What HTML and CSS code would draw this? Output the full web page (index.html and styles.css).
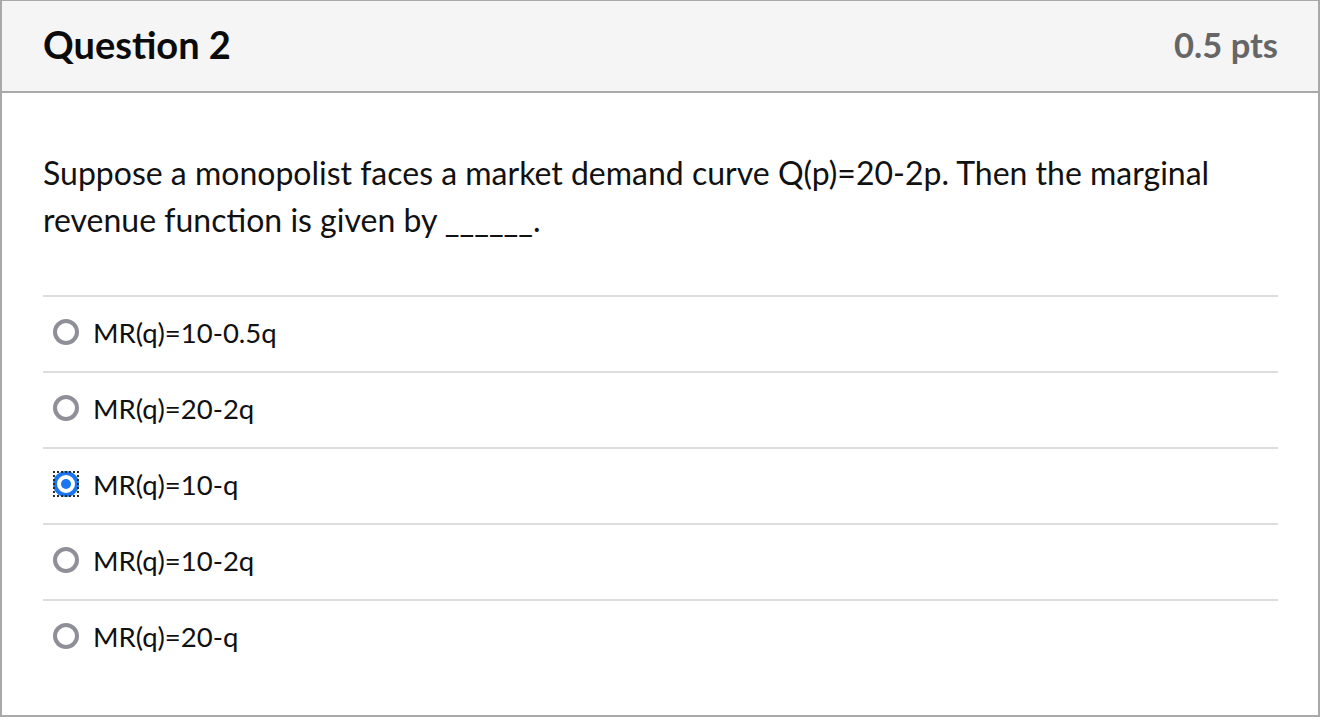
FILE: index.html
```html
<!DOCTYPE html>
<html lang="en">
<head>
<meta charset="utf-8">
<title>Question 2</title>
<link rel="stylesheet" href="styles.css">
</head>
<body>
<div class="question">
  <div class="q-header">
    <h2 class="q-title">Question 2</h2>
    <span class="q-points">0.5 pts</span>
  </div>
  <div class="q-body">
    <p class="q-text">Suppose a monopolist faces a market demand curve Q(p)=20-2p. Then the marginal revenue function is given by ______.</p>
    <div class="answers">
      <div class="answer"><span class="radio"></span><span class="label">MR(q)=10-0.5q</span></div>
      <div class="answer"><span class="radio"></span><span class="label">MR(q)=20-2q</span></div>
      <div class="answer"><span class="radio checked"></span><span class="label">MR(q)=10-q</span></div>
      <div class="answer"><span class="radio"></span><span class="label">MR(q)=10-2q</span></div>
      <div class="answer"><span class="radio"></span><span class="label">MR(q)=20-q</span></div>
    </div>
  </div>
</div>
</body>
</html>
```

FILE: styles.css
```css
html, body {
  margin: 0;
  padding: 0;
  background: #ffffff;
}

body {
  font-family: Lato, "Liberation Sans", sans-serif;
  color: #111111;
}

.question {
  box-sizing: border-box;
  width: 1320px;
  height: 717px;
  border-style: solid;
  border-color: #a9a9a9;
  border-width: 1px 2px 2px 2px;
  background: #ffffff;
}

.q-header {
  box-sizing: border-box;
  height: 92px;
  background: #f5f5f5;
  border-bottom: 2px solid #a9a9a9;
  display: flex;
  align-items: center;
  justify-content: space-between;
  padding: 0 40px 4px 41px;
}

.q-title {
  margin: 0;
  font-size: 38px;
  font-weight: 700;
  color: #0b0b0b;
}

.q-points {
  font-size: 34.5px;
  font-weight: 700;
  color: #666666;
}

.q-body {
  padding: 56px 40px 39px 41px;
}

.q-text {
  margin: 0 0 52px 0;
  font-size: 32px;
  line-height: 47px;
}

.answer {
  box-sizing: border-box;
  height: 76px;
  border-top: 2px solid #dddddd;
  display: flex;
  align-items: center;
  padding-left: 10px;
  padding-bottom: 4px;
  gap: 14px;
}

.radio {
  box-sizing: border-box;
  width: 26px;
  height: 26px;
  border-radius: 50%;
  border: 4px solid #8f8f99;
  background: #ffffff;
  position: relative;
  flex: none;
}

.radio.checked {
  border-color: #1a76f0;
}

.radio.checked::before {
  content: "";
  position: absolute;
  left: -4px;
  top: -4px;
  width: 22px;
  height: 22px;
  border: 2px dotted #2b2b2b;
}

.radio.checked::after {
  content: "";
  position: absolute;
  left: 4px;
  top: 4px;
  width: 10px;
  height: 10px;
  border-radius: 50%;
  background: #1a76f0;
}

.label {
  font-size: 27.5px;
  color: #111111;
}
```
